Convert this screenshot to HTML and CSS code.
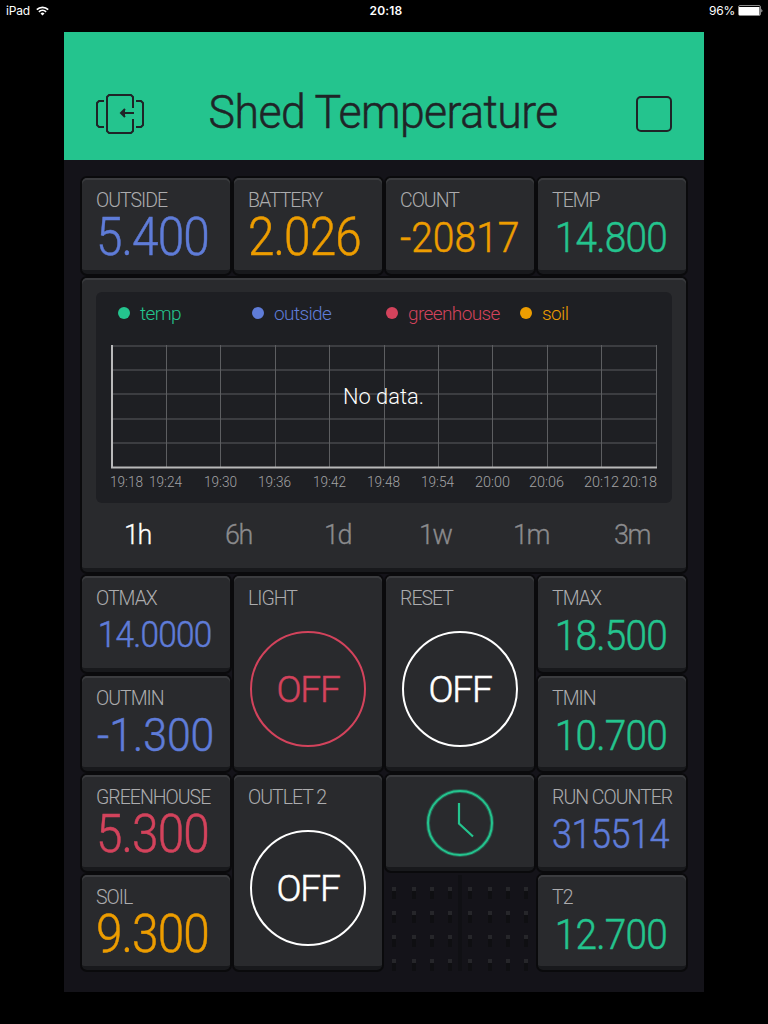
FILE: index.html
```html
<!DOCTYPE html>
<html lang="en">
<head>
  <meta charset="UTF-8">
  <meta name="viewport" content="width=device-width, initial-scale=1.0">
  <title>Shed Temperature</title>
  <link rel="stylesheet" href="styles.css">
</head>
<body>
  <!-- Status bar -->
  <div class="status">
    <div class="status-left">
      <span>iPad</span>
      <svg width="13" height="10" viewBox="0 0 13 10" fill="none" stroke="#fff" stroke-width="1.7">
        <path d="M0.8 3.6a8.2 8.2 0 0 1 11.4 0M2.9 5.9a5.2 5.2 0 0 1 7.2 0"/>
        <path d="M6.5 9.6L4.5 7.5a3 3 0 0 1 4 0z" fill="#fff" stroke="none"/>
      </svg>
    </div>
    <b class="time">20:18</b>
    <div class="status-right">
      <span>96%</span>
      <svg width="25" height="11" viewBox="0 0 25 11">
        <rect x="0.5" y="0.5" width="22" height="10" rx="1.5" fill="none" stroke="#8a8a8a"/>
        <rect x="1" y="2" width="20.5" height="8" fill="#fff"/>
        <path d="M23.5 3.5q1.5 2 0 4z" fill="#fff"/>
      </svg>
    </div>
  </div>

  <div class="app">
    <!-- Header -->
    <div class="header">
      <svg width="48" height="40" viewBox="0 0 48 40" fill="none" stroke="#1f2427" stroke-width="2">
        <path d="M8 7H3L1 9V31L3 33H8"/>
        <path d="M37 14V3L35 1H13L11 3V37L13 39H35L37 37V25"/>
        <path d="M40 7H45L47 9V31L45 33H40"/>
        <path d="M38 19H25M29 15L25 19L29 23M28 16V22"/>
      </svg>
      <h1 class="title">Shed Temperature</h1>
      <svg width="36" height="36" viewBox="0 0 36 36" fill="none" stroke="#1f2427" stroke-width="2">
        <rect x="1" y="1" width="34" height="34" rx="4"/>
      </svg>
    </div>

    <!-- Widgets -->
    <div class="board">
      <div class="card blue"><div class="label">OUTSIDE</div><div class="value xl">5.400</div></div>
      <div class="card orange"><div class="label">BATTERY</div><div class="value xl">2.026</div></div>
      <div class="card orange"><div class="label">COUNT</div><div class="value count">-20817</div></div>
      <div class="card green"><div class="label">TEMP</div><div class="value md">14.800</div></div>

      <div class="card chart">
        <div class="graph">
          <div class="legend">
            <span class="green">temp</span>
            <span class="blue">outside</span>
            <span class="red">greenhouse</span>
            <span class="orange">soil</span>
          </div>
          <svg class="plot" width="576" height="168" viewBox="0 0 576 168">
            <path class="rows" d="M16 11H561M16 35H561M16 59H561M16 84H561M16 108H561"/>
            <path class="cols" d="M70.500 10V132M124.500 10V132M179.500 10V132M233.500 10V132M288.500 10V132M342.500 10V132M396.500 10V132M451.500 10V132M505.500 10V132M560.500 10V132"/>
            <path class="axis" d="M16 10V132.500H561"/>
            <g class="ticks">
              <text x="14" y="152" textLength="33" lengthAdjust="spacingAndGlyphs">19:18</text>
              <text x="53" y="152" textLength="33" lengthAdjust="spacingAndGlyphs">19:24</text>
              <text x="108" y="152" textLength="33" lengthAdjust="spacingAndGlyphs">19:30</text>
              <text x="162" y="152" textLength="33" lengthAdjust="spacingAndGlyphs">19:36</text>
              <text x="217" y="152" textLength="33" lengthAdjust="spacingAndGlyphs">19:42</text>
              <text x="271" y="152" textLength="33" lengthAdjust="spacingAndGlyphs">19:48</text>
              <text x="325" y="152" textLength="33" lengthAdjust="spacingAndGlyphs">19:54</text>
              <text x="379" y="152" textLength="35" lengthAdjust="spacingAndGlyphs">20:00</text>
              <text x="433" y="152" textLength="35" lengthAdjust="spacingAndGlyphs">20:06</text>
              <text x="488" y="152" textLength="35" lengthAdjust="spacingAndGlyphs">20:12</text>
              <text x="526" y="152" textLength="35" lengthAdjust="spacingAndGlyphs">20:18</text>
            </g>
            <text class="empty" x="247" y="69" textLength="81" lengthAdjust="spacingAndGlyphs">No data.</text>
          </svg>
        </div>
        <div class="ranges">
          <span class="active">1h</span>
          <span>6h</span>
          <span>1d</span>
          <span>1w</span>
          <span>1m</span>
          <span>3m</span>
        </div>
      </div>

      <div class="card blue"><div class="label">OTMAX</div><div class="value sm">14.0000</div></div>
      <div class="card tall red"><div class="label">LIGHT</div><div class="switch">OFF</div></div>
      <div class="card tall white"><div class="label">RESET</div><div class="switch">OFF</div></div>
      <div class="card green"><div class="label">TMAX</div><div class="value md">18.500</div></div>

      <div class="card blue"><div class="label">OUTMIN</div><div class="value lg">-1.300</div></div>
      <div class="card green"><div class="label">TMIN</div><div class="value md">10.700</div></div>

      <div class="card red"><div class="label">GREENHOUSE</div><div class="value xl">5.300</div></div>
      <div class="card tall white"><div class="label">OUTLET 2</div><div class="switch">OFF</div></div>
      <div class="card timer">
        <svg width="68" height="68" viewBox="0 0 68 68" fill="none" stroke="#24c48e">
          <circle cx="34" cy="34" r="32" stroke-width="4" opacity="0.35"/>
          <circle cx="34" cy="34" r="32" stroke-width="2"/>
          <path d="M33 14V34.500L47 47.500" stroke-width="2.200"/>
        </svg>
      </div>
      <div class="card blue"><div class="label">RUN COUNTER</div><div class="value run">315514</div></div>

      <div class="card orange"><div class="label">SOIL</div><div class="value xl">9.300</div></div>
      <svg class="slot" width="148" height="96" viewBox="0 0 148 96">
        <defs>
          <pattern id="pegs" width="76" height="24" patternUnits="userSpaceOnUse">
            <path d="M6 16h4v8h-4zM26 16h4v8h-4zM44 16h4v8h-4zM62 16h4v8h-4z" fill="#0f0f12"/>
            <path d="M6 12h4v4h-4zM26 12h4v4h-4zM44 12h4v4h-4zM62 12h4v4h-4z" fill="#26262a"/>
          </pattern>
        </defs>
        <rect width="148" height="96" fill="url(#pegs)"/>
        <rect x="72" width="4" height="96" fill="#101014"/>
      </svg>
      <div class="card green"><div class="label">T2</div><div class="value md">12.700</div></div>
    </div>
  </div>
</body>
</html>
```

FILE: styles.css
```css
* {
  box-sizing: border-box;
}

body {
  margin: 0;
  height: 1024px;
  background-color: #000;
  color: #fff;
  font-family: Roboto, sans-serif;
  font-weight: 300;
  overflow: hidden;
}

/* Status bar */
.status {
  display: grid;
  grid-template-columns: 1fr auto 1fr;
  align-items: center;
  height: 32px;
  padding: 0 5px 11px 6px;
  font-family: Inter, sans-serif;
  font-size: 12px;
  font-weight: 400;
  letter-spacing: -0.2px;
}

.status-left, .status-right {
  display: flex;
  align-items: center;
  gap: 6px;
}

.status-right {
  justify-content: flex-end;
  gap: 3px;
}

.time {
  padding-left: 3px;
  font-weight: 600;
  letter-spacing: 0.2px;
}

.app {
  width: 640px;
  height: 960px;
  margin: 0 auto;
  background-color: #141319;
}

/* Header */
.header {
  display: flex;
  justify-content: space-between;
  align-items: center;
  height: 128px;
  padding: 36px 32px 0;
  background-color: #24c48e;
  color: #1f2427;
}

.title {
  margin: 0;
  padding: 0 14px 4px 0;
  font-size: 46px;
  font-weight: 300;
  line-height: 54px;
  letter-spacing: -0.6px;
  white-space: nowrap;
  transform: scaleX(0.97);
  -webkit-text-stroke: 0.5px;
}

/* Widgets */
.board {
  display: grid;
  grid-template-columns: repeat(4, 148px);
  grid-template-rows: repeat(8, 95.500px);
  gap: 4px;
  padding: 18px;
}

.card {
  padding: 12px 14px 0;
  border-bottom: 4px solid #18191c;
  border-radius: 5px;
  background-color: #292a2d;
  box-shadow: inset 0 2px #3b3c3f, 0 0 0 2px #0a0a0c;
}

.label {
  color: #acacae;
  font-size: 19.500px;
  line-height: 21px;
  letter-spacing: -1px;
  white-space: nowrap;
}

/* digits are condensed a little */
.value {
  line-height: 52px;
  white-space: nowrap;
  transform: scaleX(0.9);
  transform-origin: left;
  -webkit-text-stroke: 0.5px;
}

.xl {
  font-size: 53px;
  letter-spacing: -1px;
}

.lg {
  padding-left: 1px;
  font-size: 46px;
  transform: scaleX(0.93);
}

.md {
  padding-left: 3px;
  font-size: 43px;
  letter-spacing: -0.8px;
}

.count {
  padding-top: 1px;
  font-size: 42px;
  transform: scaleX(0.93);
}

.run {
  padding-top: 1px;
  font-size: 40px;
  letter-spacing: -0.5px;
}

.sm {
  padding-left: 2px;
  font-size: 37px;
  letter-spacing: -0.8px;
}

.green {
  color: #24c48e;
}

.blue {
  color: #5f7cd8;
}

.orange {
  color: #ed9d00;
}

.red {
  color: #d3435c;
}

.white {
  color: #fff;
}

.tall {
  grid-row: span 2;
}

.switch {
  display: flex;
  justify-content: center;
  align-items: center;
  width: 116px;
  height: 116px;
  margin: 22px 0 0 2px;
  border: 2px solid;
  border-radius: 50%;
  font-size: 37px;
  letter-spacing: -1.200px;
  -webkit-text-stroke: 0.5px;
}

.timer {
  display: flex;
  justify-content: center;
  padding-top: 14px;
}

/* Chart */
.chart {
  grid-column: span 4;
  grid-row: span 3;
  padding-top: 14px;
}

.graph {
  height: 211px;
  border-radius: 6px;
  background-color: #1e1f23;
}

.legend {
  display: grid;
  grid-template-columns: repeat(4, 134px);
  height: 43px;
  padding-left: 22px;
  font-size: 19px;
  line-height: 43px;
  letter-spacing: -0.6px;
}

.legend span {
  display: flex;
  align-items: center;
  gap: 10px;
}

.legend span::before {
  content: "";
  width: 12px;
  height: 12px;
  border-radius: 50%;
  background-color: currentColor;
}

.plot {
  display: block;
}

.rows {
  stroke: #3c3d41;
  stroke-width: 2;
}

.cols {
  stroke: #5d5e61;
  stroke-width: 1;
}

.axis {
  fill: none;
  stroke: #b9b9ba;
  stroke-width: 2;
}

.ticks {
  fill: #a3a3a5;
  font-size: 15.500px;
}

.empty {
  fill: #fff;
  font-size: 22.500px;
}

.ranges {
  display: grid;
  grid-template-columns: 101px 99px 95px 94px 101px auto;
  padding-left: 28px;
  color: #8b8b8d;
  font-size: 27px;
  line-height: 64px;
  letter-spacing: -1.500px;
  -webkit-text-stroke: 0.3px;
}

.active {
  color: #fff;
}
```
